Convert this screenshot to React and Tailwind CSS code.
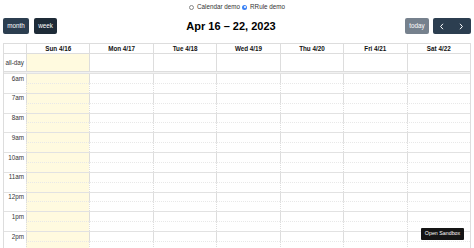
import React from "react";

const days = ["Sun 4/16", "Mon 4/17", "Tue 4/18", "Wed 4/19", "Thu 4/20", "Fri 4/21", "Sat 4/22"];
const hours = ["6am", "7am", "8am", "9am", "10am", "11am", "12pm", "1pm", "2pm"];

function Lanes({ minor }) {
  return days.map((d, i) => (
    <div
      key={d}
      className={`flex-1 border-l border-[#ddd] ${i === 0 ? "bg-[#fffadf]" : ""} ${
        minor ? "border-t border-t-[#e8e8e8] border-dotted" : ""
      }`}
    />
  ));
}

export default function App() {
  return (
    <div className="relative h-[248px] w-[474px] overflow-hidden bg-white px-[3px] font-['Liberation_Sans',Arial,sans-serif] text-[6.3px] text-[#222]">
      {/* demo switch */}
      <div className="flex h-[13px] items-center justify-center pt-[1px] text-[#333]">
        <span className="mr-[3px] h-[5px] w-[5px] rounded-full border-[0.7px] border-[#888] bg-white" />
        <span className="mr-[2px]">Calendar demo</span>
        <span className="mr-[3px] flex h-[5px] w-[5px] items-center justify-center rounded-full bg-[#3b82f6]">
          <span className="h-[2px] w-[2px] rounded-full bg-white" />
        </span>
        <span>RRule demo</span>
      </div>

      {/* toolbar */}
      <div className="mt-[5px] flex h-[16px] items-center justify-between">
        <div className="flex gap-[5px]">
          <button className="h-[16px] w-[26px] rounded-[2px] bg-[#2c3e50] text-[6.3px] text-white">month</button>
          <button className="h-[16px] w-[23px] rounded-[2px] bg-[#1e2b37] text-[6.3px] text-white">week</button>
        </div>
        <h2 className="text-[11px] font-bold leading-none text-black">Apr 16 – 22, 2023</h2>
        <div className="flex gap-[4px]">
          <button className="h-[16px] w-[24px] rounded-[2px] bg-[#76818d] text-[6.3px] text-white">today</button>
          <div className="flex h-[16px] w-[38px] overflow-hidden rounded-[2px] bg-[#2c3e50] text-white">
            <span className="flex flex-1 items-center justify-center">
              <svg width="6" height="7" viewBox="0 0 6 7" fill="none" stroke="white" strokeWidth="1">
                <path d="M4 0.8 L1.6 3.5 L4 6.2" />
              </svg>
            </span>
            <span className="flex flex-1 items-center justify-center">
              <svg width="6" height="7" viewBox="0 0 6 7" fill="none" stroke="white" strokeWidth="1">
                <path d="M2 0.8 L4.4 3.5 L2 6.2" />
              </svg>
            </span>
          </div>
        </div>
      </div>

      {/* calendar grid */}
      <div className="mt-[9px] border-x border-t border-[#ddd]">
        <div className="flex h-[9px]">
          <div className="w-[22px]" />
          {days.map((d) => (
            <div key={d} className="flex flex-1 items-center justify-center border-l border-[#ddd] font-bold text-[#111]">
              {d}
            </div>
          ))}
        </div>
        <div className="flex h-[18px] border-t border-[#ddd]">
          <div className="flex w-[22px] items-center justify-end pr-[2px] text-[#333]">all-day</div>
          <Lanes />
        </div>
        <div className="h-[2px] border-t border-[#ddd] bg-[#f1f1f1]" />
        {hours.map((h) => (
          <React.Fragment key={h}>
            <div className="flex h-[9.875px] border-t border-[#e2e2e2]">
              <div className="flex w-[22px] items-center justify-end pr-[2px] text-[#333]">{h}</div>
              <Lanes />
            </div>
            <div className="flex h-[9.875px]">
              <div className="w-[22px]" />
              <Lanes minor />
            </div>
          </React.Fragment>
        ))}
      </div>

      <button className="absolute bottom-[8px] right-[10px] h-[12px] w-[43px] rounded-[1px] bg-[#151515] text-[5.3px] text-white">
        Open Sandbox
      </button>
    </div>
  );
}
